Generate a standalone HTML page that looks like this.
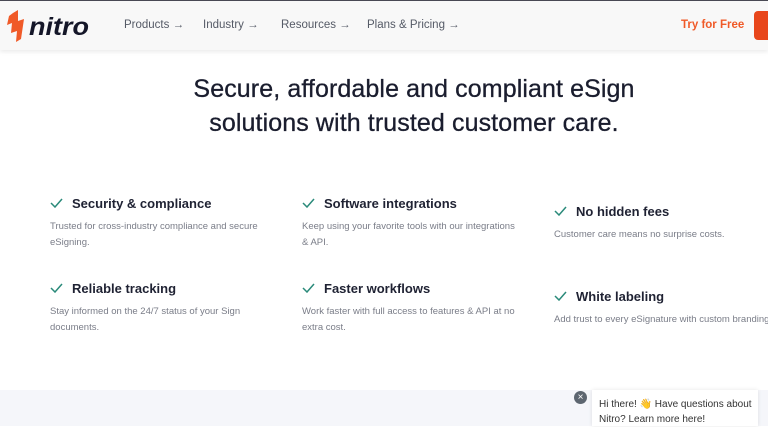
<!DOCTYPE html>
<html><head><meta charset="utf-8"><style>
*{margin:0;padding:0;box-sizing:border-box}
body{width:768px;height:426px;overflow:hidden;background:#fff;font-family:"Liberation Sans",sans-serif;position:relative;color:#1a1d2e}
.top{position:absolute;top:0;left:0;width:768px;height:1px;background:#4a4a55}
header{position:absolute;top:1px;left:0;width:768px;height:49px;background:#f8f8f8;box-shadow:0 2px 4px rgba(0,0,0,.08)}
.logo{position:absolute;left:5px;top:8px}
.nav{position:absolute;top:18px;font-size:11.5px;color:#555a66}
.try{position:absolute;left:681px;top:18px;font-size:11.5px;color:#f05a28;font-weight:bold}
.btn{position:absolute;left:754px;top:10px;width:30px;height:29px;background:#e8461b;border-radius:4px}
h1{position:absolute;top:72px;left:0;width:828px;text-align:center;font-size:25px;font-weight:normal;line-height:34px;color:#1a1d2e;letter-spacing:.1px;-webkit-text-stroke:.3px #1a1d2e}
.f{position:absolute;width:240px}
.f h3{font-size:13px;font-weight:bold;color:#1f2233;height:20px;display:flex;align-items:center}
.f h3 svg{margin-right:9px}
.f p{font-size:9.5px;color:#7a7d88;line-height:16px;margin-top:6px}
.band{position:absolute;top:390px;left:0;width:768px;height:36px;background:#f5f6fa}
.chat{position:absolute;left:592px;top:390px;width:166px;height:36px;background:#fff;font-size:10px;line-height:15px;color:#333;padding:7px 0 0 7px;box-shadow:0 0 4px rgba(0,0,0,.1)}
.x{position:absolute;left:574px;top:391px;width:13px;height:13px;border-radius:50%;background:#5d6670;color:#fff;font-size:10px;line-height:13px;text-align:center}
</style></head><body>
<div class="top"></div>
<header>
<svg class="logo" width="90" height="34" viewBox="0 0 90 34"><path d="M8 4 L13 1 L13 12 L19 10 L16 30 L11 33 L12 22 L6 24 L7 14 L2 16 L4 7 Z" fill="#f05a28"/><text x="24" y="26" font-family="Liberation Sans" font-weight="bold" font-style="italic" font-size="25" fill="#141628" textLength="60" lengthAdjust="spacingAndGlyphs">nitro</text></svg>
<span class="nav" style="left:124px">Products →</span>
<span class="nav" style="left:203px">Industry →</span>
<span class="nav" style="left:281px">Resources →</span>
<span class="nav" style="left:367px">Plans &amp; Pricing →</span>
<span class="try">Try for Free</span>
<div class="btn"></div>
</header>
<h1>Secure, affordable and compliant eSign<br>solutions with trusted customer care.</h1>
<div class="f" style="left:50px;top:193px"><h3><svg width="13" height="10" viewBox="0 0 13 10"><path d="M1 5 L5 9 L12 1" stroke="#2a8a7a" stroke-width="1.5" fill="none"/></svg>Security &amp; compliance</h3><p>Trusted for cross-industry compliance and secure<br>eSigning.</p></div>
<div class="f" style="left:302px;top:193px"><h3><svg width="13" height="10" viewBox="0 0 13 10"><path d="M1 5 L5 9 L12 1" stroke="#2a8a7a" stroke-width="1.5" fill="none"/></svg>Software integrations</h3><p>Keep using your favorite tools with our integrations<br>&amp; API.</p></div>
<div class="f" style="left:554px;top:201px;width:230px"><h3><svg width="13" height="10" viewBox="0 0 13 10"><path d="M1 5 L5 9 L12 1" stroke="#2a8a7a" stroke-width="1.5" fill="none"/></svg>No hidden fees</h3><p>Customer care means no surprise costs.</p></div>
<div class="f" style="left:50px;top:278px"><h3><svg width="13" height="10" viewBox="0 0 13 10"><path d="M1 5 L5 9 L12 1" stroke="#2a8a7a" stroke-width="1.5" fill="none"/></svg>Reliable tracking</h3><p>Stay informed on the 24/7 status of your Sign<br>documents.</p></div>
<div class="f" style="left:302px;top:278px"><h3><svg width="13" height="10" viewBox="0 0 13 10"><path d="M1 5 L5 9 L12 1" stroke="#2a8a7a" stroke-width="1.5" fill="none"/></svg>Faster workflows</h3><p>Work faster with full access to features &amp; API at no<br>extra cost.</p></div>
<div class="f" style="left:554px;top:286px;width:230px"><h3><svg width="13" height="10" viewBox="0 0 13 10"><path d="M1 5 L5 9 L12 1" stroke="#2a8a7a" stroke-width="1.5" fill="none"/></svg>White labeling</h3><p style="white-space:nowrap">Add trust to every eSignature with custom branding</p></div>
<div class="band"></div>
<div class="chat">Hi there! 👋 Have questions about<br>Nitro? Learn more here!</div>
<div class="x">×</div>
</body></html>
